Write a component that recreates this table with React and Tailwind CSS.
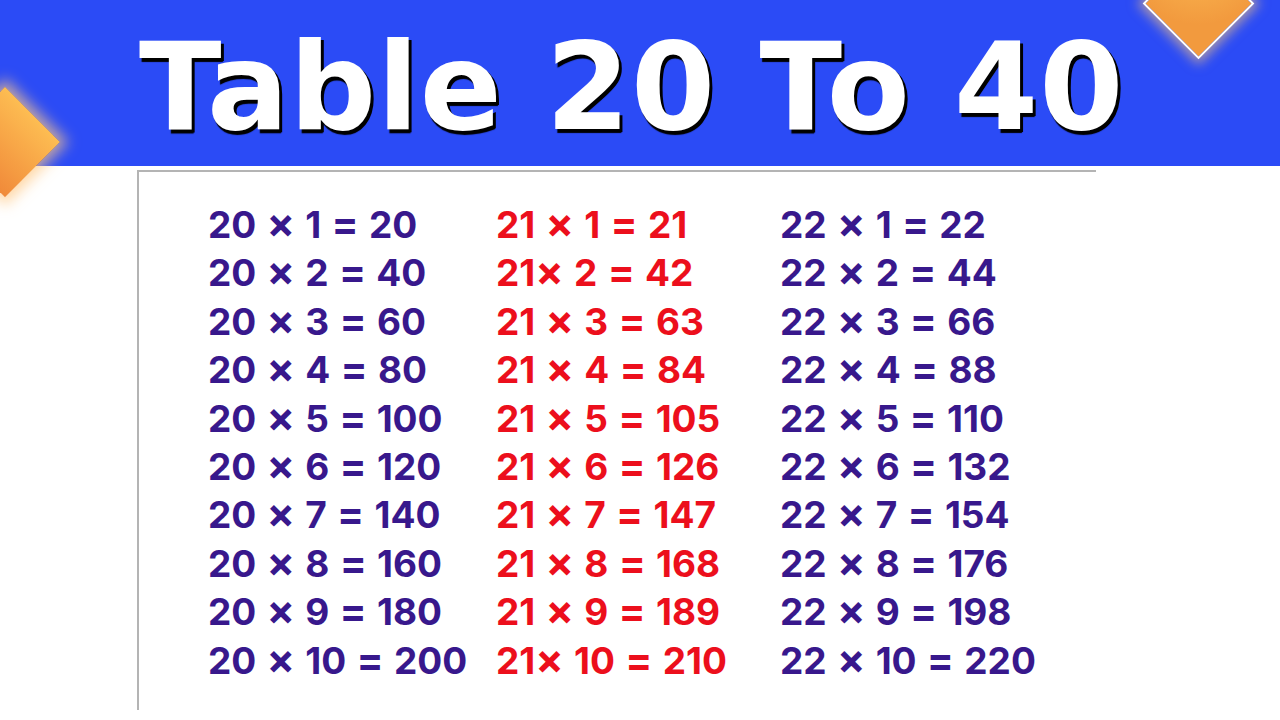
function Row({ a, b, color, tight }) {
  return (
    <div className={`${color} whitespace-nowrap [word-spacing:1.5px]`}>
      {a}
      {tight ? '' : ' '}
      <span className="text-[42px] leading-none">×</span> {b}{' '}
      <span className="text-[40px] leading-none">=</span> {a * b}
    </div>
  );
}

function Column({ n, color, tightRows = [] }) {
  return (
    <div className="flex flex-col">
      {[1, 2, 3, 4, 5, 6, 7, 8, 9, 10].map((i) => (
        <Row key={i} a={n} b={i} color={color} tight={tightRows.includes(i)} />
      ))}
    </div>
  );
}

export default function App() {
  return (
    <div className="relative w-[1280px] h-[720px] overflow-hidden bg-white">
      <header className="relative h-[166px] bg-[#2b4bf6] flex items-center pl-[139px]">
        <h1
          className="text-white font-bold text-[121px] leading-none mt-[8px] tracking-[1px] [text-shadow:3px_3px_0_#000,2px_4px_1px_#000]"
          style={{ fontFamily: '"DejaVu Sans", sans-serif' }}
        >
          Table 20 To 40
        </h1>
      </header>

      {/* decorative diamonds */}
      <div className="absolute left-[-34px] top-[103px] w-[78px] h-[78px] rotate-45 bg-gradient-to-b from-[#fdbd52] to-[#f08a3a] shadow-[0_0_14px_6px_rgba(255,200,130,0.7)]" />
      <div className="absolute left-[1159px] top-[-36px] w-[79px] h-[79px] rotate-45 border-2 border-white bg-[radial-gradient(circle_at_0%_0%,#fcbd55,#f29a3e_70%)] shadow-[0_0_12px_4px_rgba(255,200,120,0.6)]" />

      <div className="ml-[137px] mt-[4px] w-[959px] h-[540px] border-t-2 border-l-2 border-[#b4b4b4] pt-[29px] pl-[69px]">
        <div
          className="grid grid-cols-[288px_284px_1fr] font-bold text-[37px] leading-[48.4px]"
          style={{ fontFamily: 'Inter, "Open Sans", sans-serif' }}
        >
          <Column n={20} color="text-[#38188c]" />
          <Column n={21} color="text-[#ec0f1c]" tightRows={[2, 10]} />
          <Column n={22} color="text-[#38188c]" />
        </div>
      </div>
    </div>
  );
}
